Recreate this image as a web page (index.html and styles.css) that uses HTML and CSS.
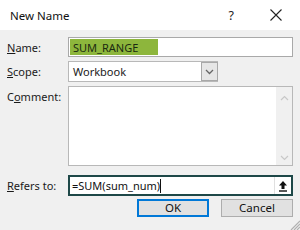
FILE: index.html
```html
<!DOCTYPE html>
<html>
<head>
<meta charset="utf-8">
<link rel="stylesheet" href="styles.css">
</head>
<body>
<div class="dialog">
  <div class="titlebar">
    <span class="title">New Name</span>
    <span class="help">?</span>
    <svg class="close" width="12" height="12" viewBox="0 0 12 12"><path d="M0.5 0.5 L11.5 11.5 M11.5 0.5 L0.5 11.5" stroke="#222" stroke-width="1.1" fill="none"/></svg>
  </div>
  <div class="content">
    <div class="row row-name">
      <label class="label"><u>N</u>ame:</label>
      <div class="input name-input"><span class="sel">SUM_RANGE</span></div>
    </div>
    <div class="row row-scope">
      <label class="label"><u>S</u>cope:</label>
      <div class="select">
        <span class="select-text">Workbook</span>
        <span class="drop"><svg width="9" height="6" viewBox="0 0 9 6"><path d="M1 1 L4.5 4.5 L8 1" stroke="#666" stroke-width="1.3" fill="none"/></svg></span>
      </div>
    </div>
    <div class="row row-comment">
      <label class="label">C<u>o</u>mment:</label>
      <div class="textarea">
        <div class="scroll">
          <svg width="9" height="6" viewBox="0 0 9 6"><path d="M1 5 L4.5 1.5 L8 5" stroke="#c8c8c8" stroke-width="1.2" fill="none"/></svg>
          <svg width="9" height="6" viewBox="0 0 9 6"><path d="M1 1 L4.5 4.5 L8 1" stroke="#c8c8c8" stroke-width="1.2" fill="none"/></svg>
        </div>
      </div>
    </div>
    <div class="row row-refers">
      <label class="label"><u>R</u>efers to:</label>
      <div class="refers">
        <span class="formula">=SUM(sum_num)</span><span class="caret"></span>
        <span class="upload"><svg width="10" height="12" viewBox="0 0 10 12"><path d="M5 1 L9 5.5 L6.5 5.5 L6.5 9 L3.5 9 L3.5 5.5 L1 5.5 Z" fill="#111"/><rect x="1" y="10.3" width="8" height="1.4" fill="#111"/></svg></span>
      </div>
    </div>
    <div class="row row-buttons">
      <button class="btn btn-ok">OK</button>
      <button class="btn">Cancel</button>
    </div>
  </div>
  <svg class="grip" width="12" height="12" viewBox="0 0 12 12"><path d="M12 3 L3 12 M12 6 L6 12 M12 9 L9 12" stroke="#b0b0b0" stroke-width="1.2"/></svg>
</div>
</body>
</html>
```
FILE: styles.css
```css
* { box-sizing: border-box; }
html, body { margin: 0; padding: 0; }
body {
  width: 300px;
  height: 230px;
  overflow: hidden;
  font-family: "Noto Sans", "Open Sans", sans-serif;
  font-size: 11px;
  color: #1a1a1a;
  background: #f0f0f0;
}
.dialog {
  position: relative;
  width: 300px;
  height: 230px;
  background: #f0f0f0;
}
.titlebar {
  height: 30px;
  background: #ffffff;
  display: flex;
  align-items: center;
  padding-left: 10px;
}
.title { font-size: 11.5px; color: #111; flex: 1; }
.help { font-size: 12.5px; color: #222; margin-right: 36px; }
.close { margin-right: 18px; }
.content {
  padding: 7px 7px 0 7px;
  display: flex;
  flex-direction: column;
}
.row { display: flex; align-items: center; }
.label { width: 61px; flex: none; color: #1a1a1a; }
.row-name { height: 20px; }
.input {
  flex: 1;
  height: 20px;
  background: #fff;
  border: 1px solid #a9a9a9;
  padding: 1px;
  display: flex;
}
.sel {
  background: #8db63c;
  color: #1b2a10;
  width: 88px;
  height: 100%;
  display: flex;
  align-items: center;
  padding-left: 3px;
}
.row-scope { margin-top: 4px; height: 21px; }
.select {
  width: 150px;
  height: 21px;
  background: #fff;
  border: 1px solid #b8b8b8;
  display: flex;
  align-items: center;
}
.select-text { flex: 1; padding-left: 4px; }
.drop {
  width: 17px;
  height: 19px;
  background: #e6e6e6;
  border: 1px solid #a8a8a8;
  display: flex;
  align-items: center;
  justify-content: center;
  margin-right: -1px;
}
.row-comment { margin-top: 4px; height: 80px; align-items: flex-start; }
.row-comment .label { margin-top: 3px; }
.textarea {
  flex: 1;
  height: 80px;
  background: #fff;
  border: 1px solid #b8b8b8;
  display: flex;
  justify-content: flex-end;
}
.scroll {
  width: 16px;
  background: #f0f0f0;
  display: flex;
  flex-direction: column;
  justify-content: space-between;
  align-items: center;
  padding: 8px 0 4px 0;
}
.row-refers { margin-top: 9px; height: 21px; }
.refers {
  flex: 1;
  height: 21px;
  background: #fff;
  border: 2px solid #1e4848;
  display: flex;
  align-items: center;
  padding-left: 2px;
}
.formula { color: #111; }
.caret { width: 1px; height: 14px; background: #111; }
.upload {
  margin-left: auto;
  width: 16px;
  height: 17px;
  display: flex;
  align-items: center;
  justify-content: center;
  border-left: 1px solid #e0e0e0;
  margin-right: 1px;
}
.row-buttons { margin-top: 3px; justify-content: flex-end; gap: 12px; }
.btn {
  width: 72px;
  height: 18px;
  font-family: inherit;
  font-size: 11.5px;
  color: #111;
  background: #e1e1e1;
  border: 1px solid #adadad;
  padding: 0;
  line-height: 14px;
}
.btn-ok { border: 2px solid #0078d7; }
.grip { position: absolute; right: 0; bottom: 0; }
```
